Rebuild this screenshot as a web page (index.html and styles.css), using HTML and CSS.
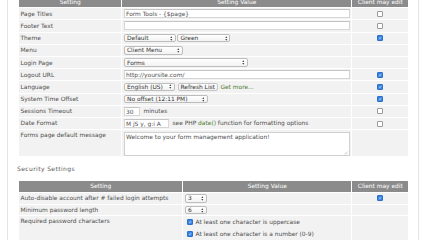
FILE: index.html
```html
<!DOCTYPE html>
<html>
<head>
<meta charset="utf-8">
<link rel="stylesheet" href="styles.css">
</head>
<body>
<div class="panel">
  <table class="grid g1">
    <colgroup><col class="c1a"><col class="c2a"><col class="c3"></colgroup>
    <tr class="head"><th>Setting</th><th>Setting Value</th><th>Client may edit</th></tr>
    <tr><td>Page Titles</td><td><span class="inp w-full">Form Tools - {$page}</span></td><td class="ce"><span class="cb"></span></td></tr>
    <tr><td>Footer Text</td><td><span class="inp w-full"></span></td><td class="ce"><span class="cb"></span></td></tr>
    <tr><td>Theme</td><td><span class="sel w-def">Default<svg class="arr" viewBox="0 0 3 6"><path d="M1.5 0.3 L2.7 2.3 L0.3 2.3 Z M1.5 5.7 L2.7 3.7 L0.3 3.7 Z"/></svg></span><span class="sel w-green">Green<svg class="arr" viewBox="0 0 3 6"><path d="M1.5 0.3 L2.7 2.3 L0.3 2.3 Z M1.5 5.7 L2.7 3.7 L0.3 3.7 Z"/></svg></span></td><td class="ce"><span class="cb on"><svg viewBox="0 0 6 6"><path d="M1.5 3.3 L2.6 4.3 L4.6 1.7"/></svg></span></td></tr>
    <tr><td>Menu</td><td><span class="sel w-menu">Client Menu<svg class="arr" viewBox="0 0 3 6"><path d="M1.5 0.3 L2.7 2.3 L0.3 2.3 Z M1.5 5.7 L2.7 3.7 L0.3 3.7 Z"/></svg></span></td><td class="ce"></td></tr>
    <tr><td>Login Page</td><td><span class="sel w-forms">Forms<svg class="arr" viewBox="0 0 3 6"><path d="M1.5 0.3 L2.7 2.3 L0.3 2.3 Z M1.5 5.7 L2.7 3.7 L0.3 3.7 Z"/></svg></span></td><td class="ce"></td></tr>
    <tr><td>Logout URL</td><td><span class="inp w-full">http://yoursite.com/</span></td><td class="ce"><span class="cb on"><svg viewBox="0 0 6 6"><path d="M1.5 3.3 L2.6 4.3 L4.6 1.7"/></svg></span></td></tr>
    <tr><td>Language</td><td><span class="sel w-lang">English (US)<svg class="arr" viewBox="0 0 3 6"><path d="M1.5 0.3 L2.7 2.3 L0.3 2.3 Z M1.5 5.7 L2.7 3.7 L0.3 3.7 Z"/></svg></span><span class="btn">Refresh List</span><a class="lnk">Get more...</a></td><td class="ce"><span class="cb on"><svg viewBox="0 0 6 6"><path d="M1.5 3.3 L2.6 4.3 L4.6 1.7"/></svg></span></td></tr>
    <tr><td>System Time Offset</td><td><span class="sel w-time">No offset (12:11 PM)<svg class="arr" viewBox="0 0 3 6"><path d="M1.5 0.3 L2.7 2.3 L0.3 2.3 Z M1.5 5.7 L2.7 3.7 L0.3 3.7 Z"/></svg></span></td><td class="ce"><span class="cb on"><svg viewBox="0 0 6 6"><path d="M1.5 3.3 L2.6 4.3 L4.6 1.7"/></svg></span></td></tr>
    <tr><td>Sessions Timeout</td><td><span class="inp w-num">30</span><span class="txt">minutes</span></td><td class="ce"><span class="cb"></span></td></tr>
    <tr><td>Date Format</td><td><span class="inp w-date">M jS y, g:i A</span><span class="txt">see PHP <a class="lnk2">date()</a> function for formatting options</span></td><td class="ce"><span class="cb"></span></td></tr>
    <tr class="tall"><td>Forms page default message</td><td><span class="area">Welcome to your form management application!<svg class="grip" viewBox="0 0 4 4"><path d="M0.5 3.5 L3.5 0.5 M2 3.5 L3.5 2"/></svg></span></td><td class="ce"></td></tr>
  </table>

  <div class="sect">Security Settings</div>

  <table class="grid g2">
    <colgroup><col class="c1b"><col class="c2b"><col class="c3"></colgroup>
    <tr class="head"><th>Setting</th><th>Setting Value</th><th>Client may edit</th></tr>
    <tr><td>Auto-disable account after # failed login attempts</td><td><span class="sel w-small">3<svg class="arr" viewBox="0 0 3 6"><path d="M1.5 0.3 L2.7 2.3 L0.3 2.3 Z M1.5 5.7 L2.7 3.7 L0.3 3.7 Z"/></svg></span></td><td class="ce"><span class="cb on"><svg viewBox="0 0 6 6"><path d="M1.5 3.3 L2.6 4.3 L4.6 1.7"/></svg></span></td></tr>
    <tr><td>Minimum password length</td><td><span class="sel w-small">6<svg class="arr" viewBox="0 0 3 6"><path d="M1.5 0.3 L2.7 2.3 L0.3 2.3 Z M1.5 5.7 L2.7 3.7 L0.3 3.7 Z"/></svg></span></td><td class="ce"></td></tr>
    <tr class="multi"><td><div class="line">Required password characters</div></td><td>
      <div class="opt"><span class="cb on"><svg viewBox="0 0 6 6"><path d="M1.5 3.3 L2.6 4.3 L4.6 1.7"/></svg></span>At least one character is uppercase</div>
      <div class="opt"><span class="cb on"><svg viewBox="0 0 6 6"><path d="M1.5 3.3 L2.6 4.3 L4.6 1.7"/></svg></span>At least one character is a number (0-9)</div>
    </td><td class="ce"></td></tr>
  </table>
</div>
</body>
</html>
```
FILE: styles.css
```css
* { box-sizing: border-box; }
html, body { margin: 0; padding: 0; background: #fff; overflow: hidden; }
body {
  font-family: "DejaVu Sans", Verdana, sans-serif;
  font-size: 5.9px;
  color: #4d4d4d;
}
.panel {
  margin-left: 7px;
  width: 412px;
  height: 260px;
  border-left: 1px solid #e4e4e4;
  border-right: 1px solid #e4e4e4;
  padding: 0 10px;
}
.grid {
  width: 390px;
  border-collapse: collapse;
  table-layout: fixed;
}
.g1 { margin-top: -5px; }
.c1a { width: 103px; }
.c2a { width: 230px; }
.c3 { width: 57px; }
.c1b { width: 164px; }
.c2b { width: 169px; }
.grid th, .grid td {
  border: 1px solid #fff;
  height: 12.2px;
  padding: 0 1px 0 1.5px;
  vertical-align: middle;
  white-space: nowrap;
  overflow: hidden;
}
.grid td { background: #f2f2f2; }
.grid th {
  background: #8b8b8b;
  color: #fff;
  font-weight: normal;
  text-align: center;
}
.g2 th, .g2 td { height: 11.8px; }
.ce { text-align: center; }
.tall td { height: 27px; vertical-align: top; padding-top: 1.5px; }
.multi td { vertical-align: top; padding-top: 0; }
.line { height: 11px; line-height: 11px; }
.inp {
  display: inline-block;
  vertical-align: middle;
  height: 9px;
  line-height: 8px;
  padding: 0 1.5px;
  background: #fff;
  border: 1px solid #d6d6d6;
  border-top-color: #c4c4c4;
  overflow: hidden;
}
.w-full { width: 226px; }
.w-num { width: 16px; }
.w-date { width: 45px; }
.sel {
  display: inline-flex;
  align-items: center;
  justify-content: space-between;
  vertical-align: middle;
  height: 8.5px;
  padding: 0 1.5px 0 2.5px;
  background: linear-gradient(#fff, #f2f2f2);
  border: 1px solid #bdbdbd;
  border-radius: 2px;
  color: #333;
}
.sel + .sel { margin-left: 1.5px; }
.arr { width: 2.6px; height: 5px; fill: #444; flex: none; }
.w-def { width: 52px; }
.w-green { width: 53px; }
.w-menu { width: 59px; }
.w-forms { width: 124px; }
.w-lang { width: 51px; }
.w-time { width: 84px; }
.w-small { width: 22px; }
.btn {
  display: inline-block;
  vertical-align: middle;
  height: 8.5px;
  line-height: 6.5px;
  margin-left: 3px;
  padding: 0 2px;
  background: linear-gradient(#fff, #efefef);
  border: 1px solid #c4c4c4;
  border-radius: 2px;
  color: #333;
}
.lnk { margin-left: 2.5px; color: #4d7a2a; vertical-align: middle; }
.lnk2 { color: #4d7a2a; }
.txt { margin-left: 4px; vertical-align: middle; }
.area {
  position: relative;
  display: block;
  width: 226px;
  height: 24.5px;
  padding: 1px 1.5px;
  background: #fff;
  border: 1px solid #d0d0d0;
  white-space: normal;
}
.grip {
  position: absolute;
  right: 0.5px;
  bottom: 0.5px;
  width: 4px;
  height: 4px;
  stroke: #aaa;
  stroke-width: 0.5;
  fill: none;
}
.cb {
  display: inline-block;
  vertical-align: middle;
  width: 6px;
  height: 6px;
  background: #fff;
  border: 0.6px solid #9a9a9a;
  border-radius: 1px;
}
.cb svg { display: block; width: 100%; height: 100%; }
.cb.on { background: #3a87e6; border-color: #2c6fc4; }
.cb.on path { stroke: #fff; stroke-width: 0.9; fill: none; }
.opt { height: 11.8px; display: flex; align-items: center; gap: 3px; }
.opt .cb { margin-left: 2px; }
.sect {
  margin: 8px 0 0 -1px;
  height: 15px;
  font-size: 6px;
  letter-spacing: 0.4px;
  color: #555;
}
```
